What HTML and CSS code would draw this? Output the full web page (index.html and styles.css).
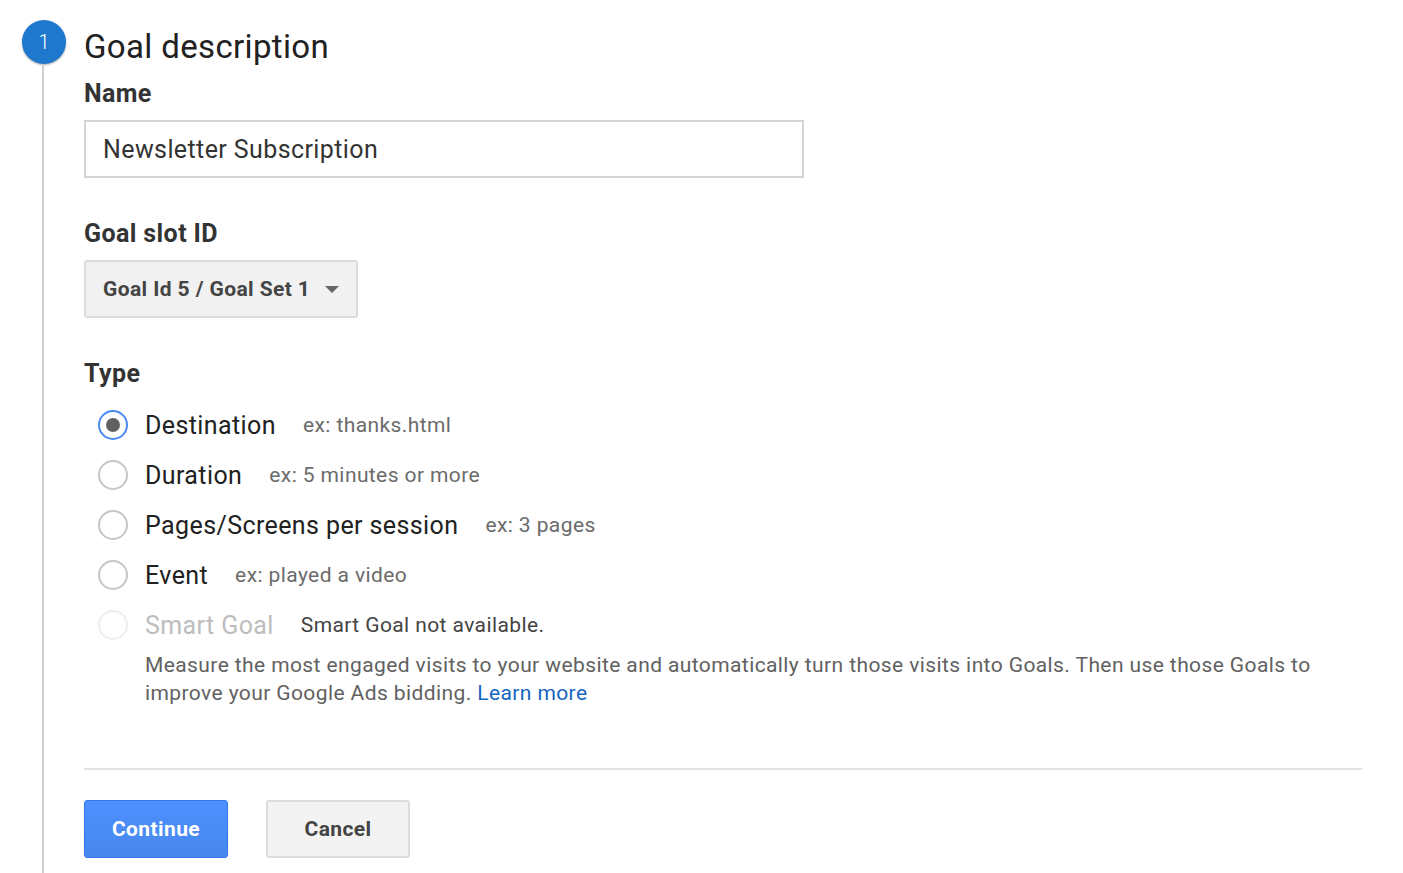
FILE: index.html
```html
<!DOCTYPE html>
<html>
<head>
<meta charset="utf-8">
<link rel="stylesheet" href="styles.css">
</head>
<body>
<div class="step">
  <div class="rail">
    <div class="step-num">1</div>
    <div class="step-line"></div>
  </div>
  <div class="content">
    <h1 class="title">Goal description</h1>
    <div class="label">Name</div>
    <div class="text-input">Newsletter Subscription</div>
    <div class="label label-gap">Goal slot ID</div>
    <div class="select">
      <span>Goal Id 5 / Goal Set 1</span>
      <span class="caret"></span>
    </div>
    <div class="label label-gap">Type</div>
    <div class="radios">
      <div class="radio-row">
        <span class="radio checked"></span>
        <span class="radio-label">Destination</span>
        <span class="radio-ex">ex: thanks.html</span>
      </div>
      <div class="radio-row">
        <span class="radio"></span>
        <span class="radio-label">Duration</span>
        <span class="radio-ex">ex: 5 minutes or more</span>
      </div>
      <div class="radio-row">
        <span class="radio"></span>
        <span class="radio-label">Pages/Screens per session</span>
        <span class="radio-ex">ex: 3 pages</span>
      </div>
      <div class="radio-row">
        <span class="radio"></span>
        <span class="radio-label">Event</span>
        <span class="radio-ex">ex: played a video</span>
      </div>
      <div class="radio-row disabled">
        <span class="radio"></span>
        <span class="radio-label">Smart Goal</span>
        <span class="radio-ex unavailable">Smart Goal not available.</span>
      </div>
      <p class="smart-desc">Measure the most engaged visits to your website and automatically turn those visits into Goals. Then use those Goals to improve your Google Ads bidding. <a href="#" class="link">Learn more</a></p>
    </div>
    <div class="separator"></div>
    <div class="actions">
      <button class="btn btn-primary">Continue</button>
      <button class="btn btn-secondary">Cancel</button>
    </div>
  </div>
</div>
</body>
</html>
```
FILE: styles.css
```css
html, body {
  margin: 0;
  padding: 0;
  background: #fff;
  height: 100%;
  overflow: hidden;
}
body {
  font-family: Roboto, "Liberation Sans", Arial, sans-serif;
  color: #333;
  letter-spacing: 0.4px;
}
.step {
  display: flex;
  min-height: 873px;
}
.rail {
  width: 84px;
  flex: none;
  display: flex;
  flex-direction: column;
  padding-top: 20px;
  box-sizing: border-box;
}
.step-num {
  width: 44px;
  height: 44px;
  margin-left: 22px;
  border-radius: 50%;
  background: #1e78cd;
  box-shadow: 0 1px 2px rgba(0, 0, 0, 0.35);
  color: #fff;
  font-size: 20px;
  font-weight: 300;
  letter-spacing: 0;
  display: flex;
  align-items: center;
  justify-content: center;
}
.step-line {
  flex: 1;
  width: 2px;
  margin-left: 42px;
  background: #cfcfcf;
}
.content {
  flex: 1;
  padding-top: 27px;
  padding-right: 41px;
}
.title {
  margin: 0;
  font-size: 33px;
  font-weight: 400;
  line-height: 40px;
  color: #212121;
  letter-spacing: 0.35px;
}
.label {
  margin-top: 12px;
  font-size: 25px;
  font-weight: 700;
  line-height: 30px;
  color: #333;
}
.label-gap {
  margin-top: 41px;
}
.text-input {
  margin-top: 11px;
  width: 720px;
  height: 58px;
  box-sizing: border-box;
  border: 2px solid #d4d4d4;
  padding: 0 17px;
  display: flex;
  align-items: center;
  font-size: 25px;
  color: #333;
}
.select {
  margin-top: 11px;
  width: 274px;
  height: 58px;
  box-sizing: border-box;
  border: 2px solid #dcdcdc;
  border-radius: 3px;
  background: #f1f1f1;
  padding: 0 17px;
  display: flex;
  align-items: center;
  justify-content: space-between;
  font-size: 21px;
  font-weight: 700;
  color: #444;
}
.caret {
  width: 0;
  height: 0;
  border-left: 7px solid transparent;
  border-right: 7px solid transparent;
  border-top: 7px solid #666;
}
.radios {
  margin-top: 11px;
}
.radio-row {
  height: 50px;
  display: flex;
  align-items: center;
}
.radio {
  width: 30px;
  height: 30px;
  box-sizing: border-box;
  margin-left: 14px;
  border: 2px solid #c6c6c6;
  border-radius: 50%;
  flex: none;
  display: flex;
  align-items: center;
  justify-content: center;
}
.radio.checked {
  border-color: #4a8af4;
}
.radio.checked::after {
  content: "";
  width: 14px;
  height: 14px;
  border-radius: 50%;
  background: #616161;
}
.radio-label {
  margin-left: 17px;
  font-size: 25px;
  color: #212121;
}
.radio-ex {
  margin-left: 27px;
  font-size: 21px;
  color: #6b6b6b;
}
.disabled .radio {
  border-color: #eeeeee;
}
.disabled .radio-label {
  color: #bdbdbd;
}
.radio-ex.unavailable {
  color: #444;
}
.smart-desc {
  margin: 1px 0 0 61px;
  font-size: 21px;
  line-height: 28px;
  color: #616161;
}
.link {
  color: #1565c0;
  text-decoration: none;
}
.separator {
  margin-top: 61px;
  height: 2px;
  background: #e2e2e2;
}
.actions {
  margin-top: 30px;
  display: flex;
  gap: 38px;
}
.btn {
  width: 144px;
  height: 58px;
  box-sizing: border-box;
  border-radius: 3px;
  font-family: Roboto, "Liberation Sans", Arial, sans-serif;
  font-size: 21px;
  font-weight: 700;
  letter-spacing: 0.4px;
  padding: 0;
}
.btn-primary {
  background: linear-gradient(#4d90fe, #4787ed);
  border: 1px solid #3079ed;
  color: #fff;
}
.btn-secondary {
  background: #f3f3f3;
  border: 2px solid #dcdcdc;
  color: #444;
}
```
